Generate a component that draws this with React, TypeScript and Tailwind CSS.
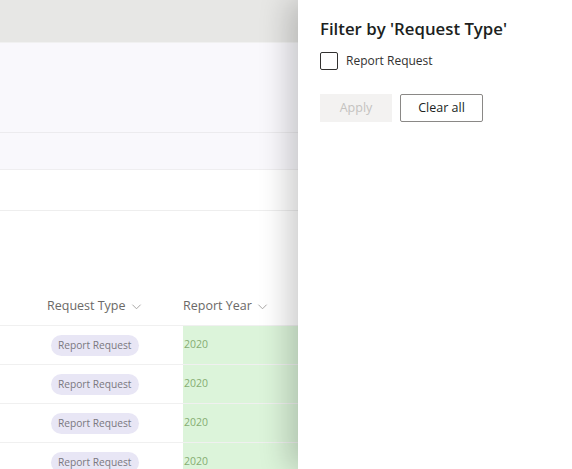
const rows = [0, 1, 2, 3];

const Chevron = () => (
  <svg width="11" height="11" viewBox="0 0 12 12" className="ml-[5px]">
    <path d="M1.5 4 L6 8.5 L10.5 4" fill="none" stroke="#a19f9d" strokeWidth="1" />
  </svg>
);

export default function App() {
  return (
    <div
      className="relative w-[572px] h-[469px] overflow-hidden bg-white"
      style={{ fontFamily: '"Open Sans", "Noto Sans", sans-serif' }}
    >
      {/* page behind the panel */}
      <div className="flex flex-col w-full">
        <div className="h-[43px] bg-[#e7e7e5] border-b border-[#f1f1f1]" />
        <div className="h-[90px] bg-[#f9f8fc] border-b border-[#ecebee]" />
        <div className="h-[37px] bg-[#f9f8fc] border-b border-[#efeef0]" />
        <div className="h-[41px] bg-white border-b border-[#eeeeee]" />
        <div className="h-[76px] bg-white" />
        <div className="flex items-center h-[39px] border-b border-[#f0f0f0] text-[12.5px] text-[#6b6967]">
          <div className="w-[47px]" />
          <div className="w-[136px] flex items-center">
            Request Type
            <Chevron />
          </div>
          <div className="flex items-center">
            Report Year
            <Chevron />
          </div>
        </div>
        {rows.map((r) => (
          <div key={r} className="flex h-[39px] border-b border-[#f0f0f0]">
            <div className="w-[51px]" />
            <div className="w-[132px] flex items-center">
              <span className="rounded-full bg-[#e8e6f5] px-[7px] h-[21px] leading-[21px] text-[10.2px] text-[#7a7880]">
                Report Request
              </span>
            </div>
            <div className="flex-1 bg-[#dcf4da] flex items-center pl-[1px] text-[10.5px] text-[#86ad72]">
              2020
            </div>
          </div>
        ))}
      </div>

      {/* filter panel */}
      <div className="absolute top-0 right-0 h-full w-[274px] bg-white shadow-[-10px_0_28px_rgba(0,0,0,0.2)] pl-[22px] pt-[16px]">
        <h2 className="text-[16.8px] font-semibold text-[#201f1e] leading-[26px]">
          Filter by 'Request Type'
        </h2>
        <label className="flex items-center mt-[10px] gap-[8px]">
          <span className="w-[18px] h-[18px] border border-[#323130] rounded-[2px]" />
          <span className="text-[12px] text-[#323130]">Report Request</span>
        </label>
        <div className="flex gap-[8px] mt-[24px]">
          <button className="w-[72px] h-[28px] bg-[#f3f2f1] text-[12.5px] text-[#c4c2c0]">
            Apply
          </button>
          <button className="w-[83px] h-[28px] border border-[#8a8886] rounded-[2px] text-[12.5px] text-[#201f1e]">
            Clear all
          </button>
        </div>
      </div>
    </div>
  );
}
